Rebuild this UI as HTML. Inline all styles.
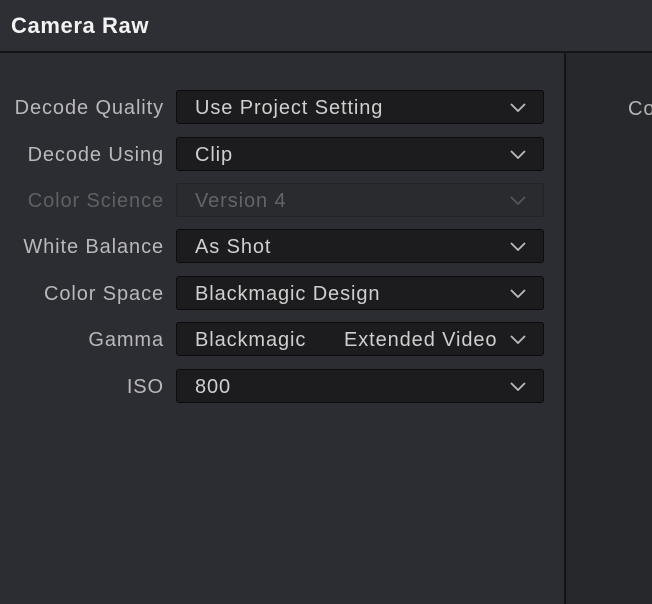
<!DOCTYPE html>
<html><head><style>
body{margin:0;width:652px;height:604px;background:#2c2d32;font-family:"Liberation Sans",sans-serif;overflow:hidden;position:relative}
.hdr{position:absolute;left:0;top:0;width:652px;height:51px;background:#2e2f34;border-bottom:2px solid #141416}
.hdr span{position:absolute;left:11px;top:13px;color:#f2f2f2;font-size:22px;font-weight:bold;letter-spacing:0.6px}
.right{position:absolute;left:564px;top:53px;width:88px;height:551px;background:#27282c;border-left:2px solid #141416}
.right span{position:absolute;left:62px;top:45px;color:#b4b4b4;font-size:20px;letter-spacing:0.9px}
.row{position:absolute;left:0;width:560px;height:34px}
.lab{position:absolute;right:396px;top:7px;color:#b9b9bb;font-size:20px;white-space:nowrap;letter-spacing:0.9px}
.box{position:absolute;left:176px;top:0;width:366px;height:32px;background:#1c1c1e;border:1px solid #0c0c0d;border-radius:3px}
.box span{position:absolute;left:18px;top:6px;color:#cfcfcf;font-size:20px;letter-spacing:0.9px;white-space:nowrap}
.box svg{position:absolute;left:333px;top:12px}
.dis .lab{color:#5f6064}.dis .box{background:#2a2b2f;border-color:#232327}.dis .box span{color:#636468}
</style></head><body>
<div class="hdr"><span>Camera Raw</span></div>
<div class="right"><span>Co</span></div>
<div class="row" style="top:90px"><div class="lab">Decode Quality</div><div class="box"><span>Use Project Setting</span><svg width="16" height="9"><path d="M1 1L8 8L15 1" stroke="#bbb" stroke-width="1.8" fill="none"/></svg></div></div>
<div class="row" style="top:137px"><div class="lab">Decode Using</div><div class="box"><span>Clip</span><svg width="16" height="9"><path d="M1 1L8 8L15 1" stroke="#bbb" stroke-width="1.8" fill="none"/></svg></div></div>
<div class="row dis" style="top:183px"><div class="lab">Color Science</div><div class="box"><span>Version 4</span><svg width="16" height="9"><path d="M1 1L8 8L15 1" stroke="#55565a" stroke-width="1.8" fill="none"/></svg></div></div>
<div class="row" style="top:229px"><div class="lab">White Balance</div><div class="box"><span>As Shot</span><svg width="16" height="9"><path d="M1 1L8 8L15 1" stroke="#bbb" stroke-width="1.8" fill="none"/></svg></div></div>
<div class="row" style="top:276px"><div class="lab">Color Space</div><div class="box"><span>Blackmagic Design</span><svg width="16" height="9"><path d="M1 1L8 8L15 1" stroke="#bbb" stroke-width="1.8" fill="none"/></svg></div></div>
<div class="row" style="top:322px"><div class="lab">Gamma</div><div class="box"><span>Blackmagic</span><span style="left:167px">Extended Video</span><svg width="16" height="9"><path d="M1 1L8 8L15 1" stroke="#bbb" stroke-width="1.8" fill="none"/></svg></div></div>
<div class="row" style="top:369px"><div class="lab">ISO</div><div class="box"><span>800</span><svg width="16" height="9"><path d="M1 1L8 8L15 1" stroke="#bbb" stroke-width="1.8" fill="none"/></svg></div></div>
</body></html>
